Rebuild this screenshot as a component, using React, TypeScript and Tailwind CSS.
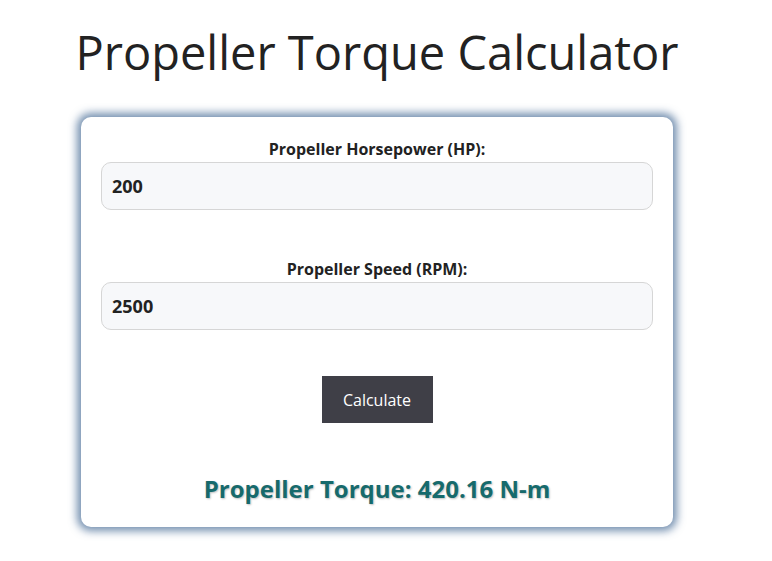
export default function App() {
  return (
    <div
      className="min-h-[561px] w-[754px] bg-white flex flex-col items-center"
      style={{ fontFamily: '"Open Sans", "Noto Sans", sans-serif' }}
    >
      <h1 className="mt-[24px] text-[47px] leading-[1.2] text-[#222222]">
        Propeller Torque Calculator
      </h1>

      <div className="mt-[37px] w-[592px] rounded-[10px] bg-white px-5 pt-[21px] pb-[20px] shadow-[0_0_9px_4px_rgba(80,115,155,0.8)]">
        <div className="flex flex-col items-center">
          <label className="text-[16px] font-bold text-[#222222] leading-[22px]">
            Propeller Horsepower (HP):
          </label>
          <input
            defaultValue="200"
            className="mt-[2px] h-[48px] w-full rounded-[10px] border border-[#d6d6d6] bg-[#f7f8fa] px-[10px] text-[18px] font-bold text-[#222222] outline-none"
          />
        </div>

        <div className="mt-[48px] flex flex-col items-center">
          <label className="text-[16px] font-bold text-[#222222] leading-[22px]">
            Propeller Speed (RPM):
          </label>
          <input
            defaultValue="2500"
            className="mt-[2px] h-[48px] w-full rounded-[10px] border border-[#d6d6d6] bg-[#f7f8fa] px-[10px] text-[18px] font-bold text-[#222222] outline-none"
          />
        </div>

        <div className="mt-[46px] flex justify-center">
          <button className="h-[47px] w-[111px] bg-[#3f3f47] text-[16px] text-white">
            Calculate
          </button>
        </div>

        <p className="mt-[48px] text-center text-[24px] font-bold text-[#166a6c] [text-shadow:1px_1px_2px_rgba(0,0,0,0.25)]">
          Propeller Torque: 420.16 N-m
        </p>
      </div>
    </div>
  );
}
